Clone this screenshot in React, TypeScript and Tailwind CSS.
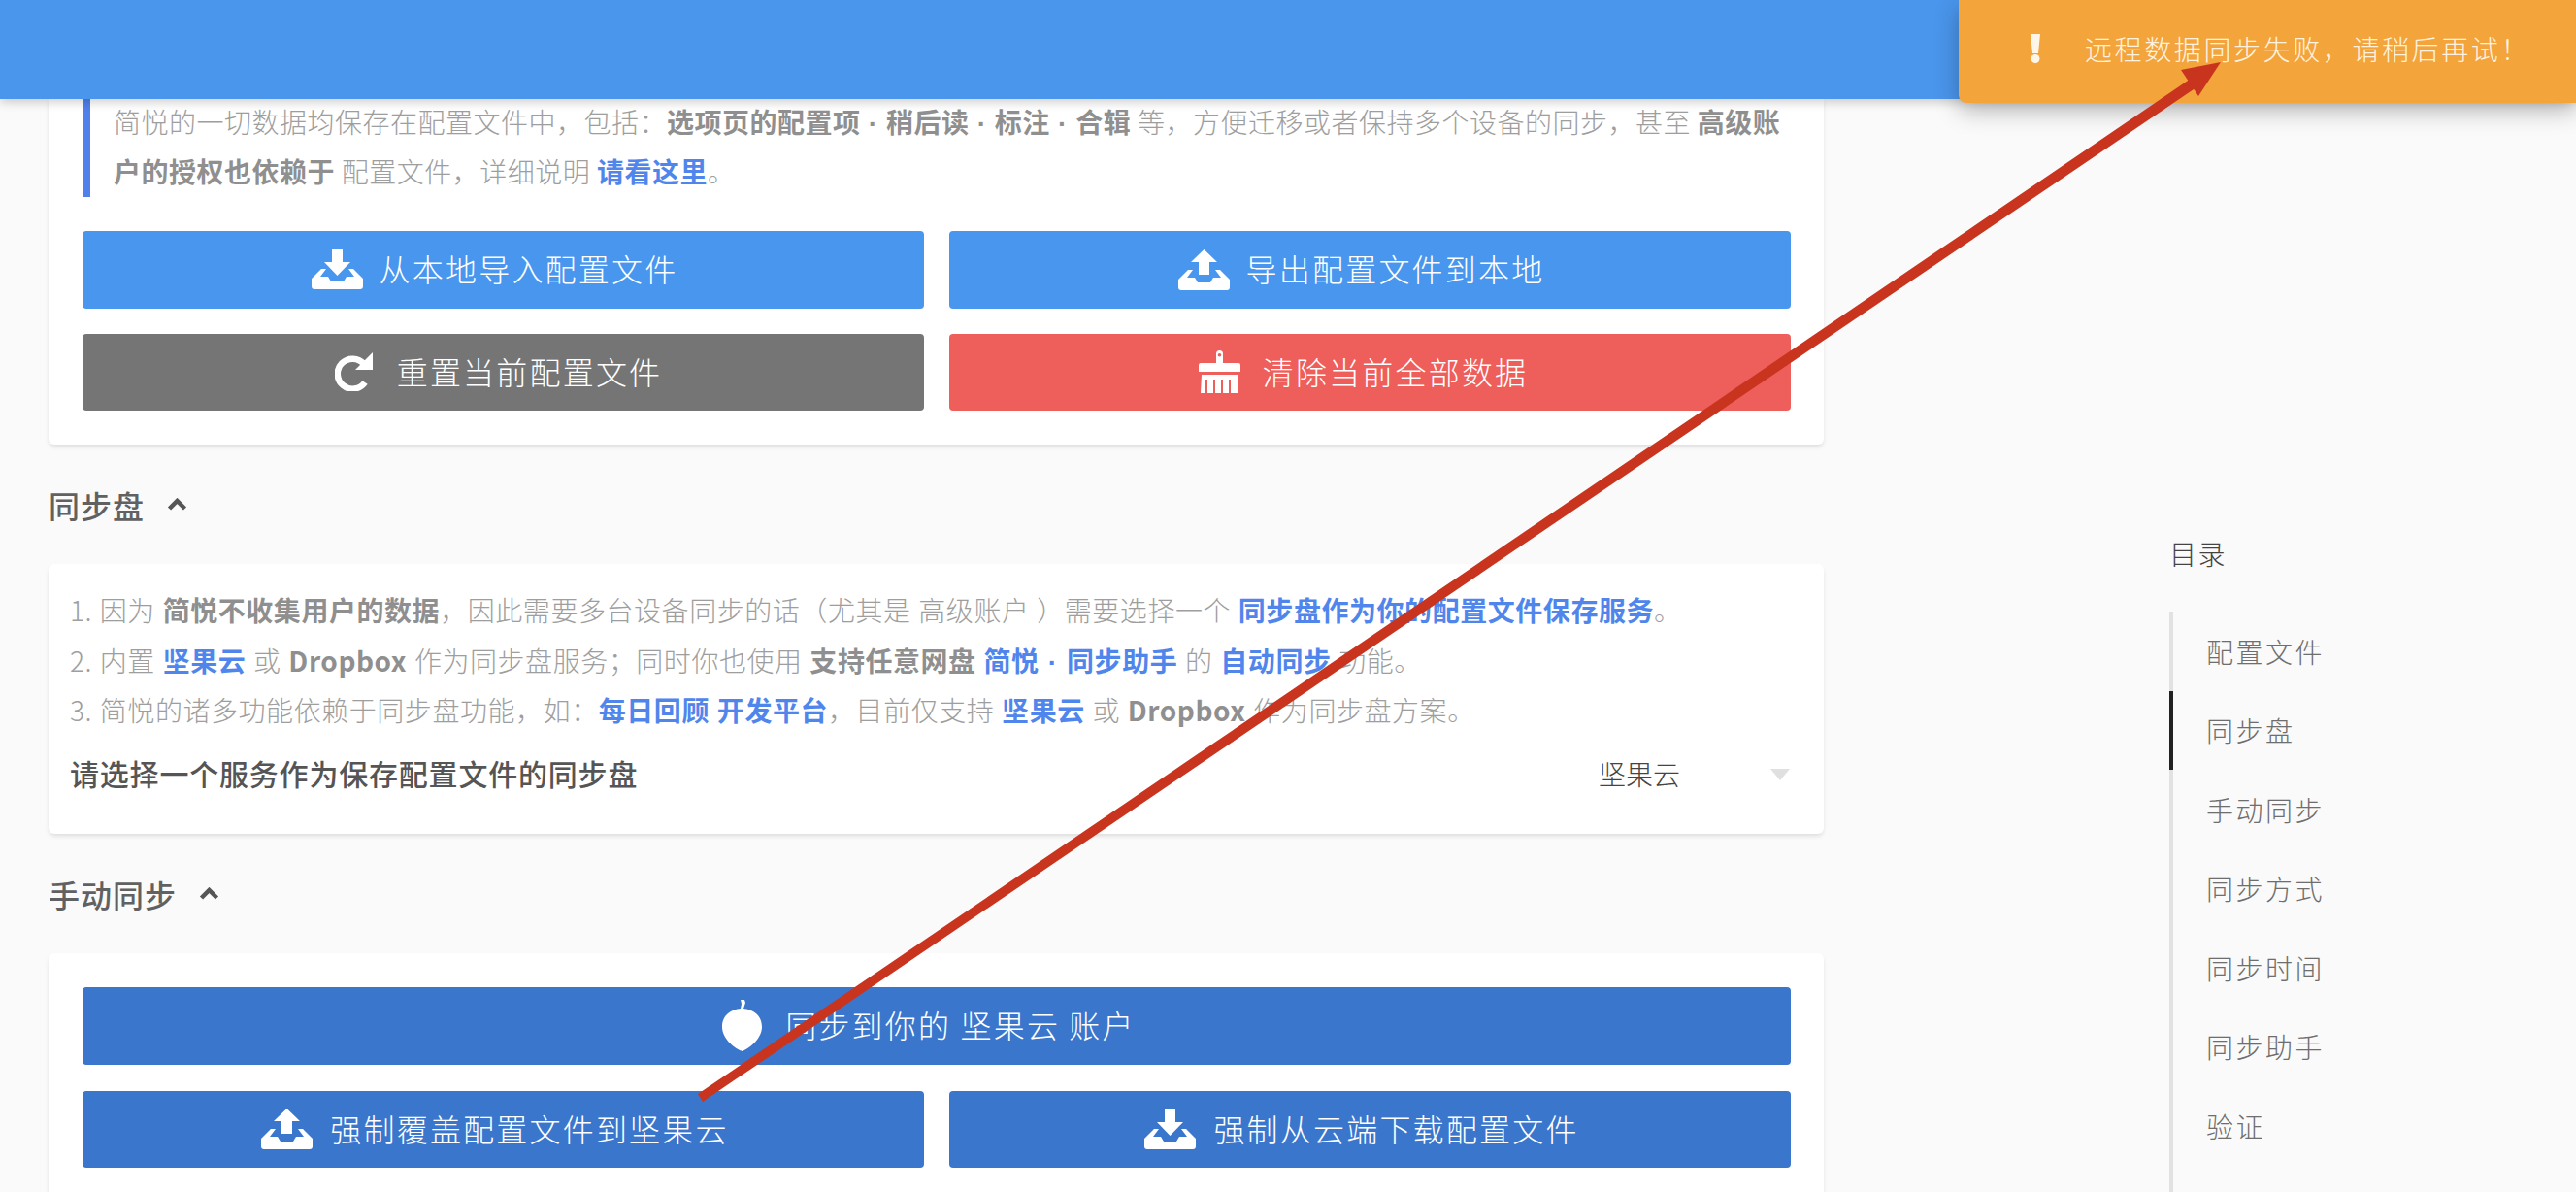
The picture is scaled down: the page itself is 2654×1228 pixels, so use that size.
import type { ReactNode } from 'react'

const DownloadIcon = () => (
  <svg viewBox="0 0 53 41" className="h-[41px] w-[53px] shrink-0" fill="white">
    <path d="M21 0h11v13h8L26.500 27 13 13h8z" />
    <path d="M0 30 10 20h5l-6 8h8l3 5h13l3-5h8l-6-8h5l10 10v8q0 3-3 3H3q-3 0-3-3z" />
  </svg>
)

const UploadIcon = () => (
  <svg viewBox="0 0 53 42" className="h-[42px] w-[53px] shrink-0" fill="white">
    <path d="M26.500 0 40 13h-8v13H21V13h-8z" />
    <path d="M0 31 10 21h5l-6 8h8l3 5h13l3-5h8l-6-8h5l10 10v8q0 3-3 3H3q-3 0-3-3z" />
  </svg>
)

const ResetIcon = () => (
  <svg viewBox="0 0 39 40" className="h-[40px] w-[39px] shrink-0" fill="none">
    <path d="M30 12A15.500 15.500 0 1 0 31 31" stroke="white" strokeWidth="6.500" />
    <path d="M39 0v18H21z" fill="white" />
  </svg>
)

const BrushIcon = () => (
  <svg viewBox="0 0 43 44" className="h-[44px] w-[43px] shrink-0" fill="white">
    <path fillRule="evenodd" d="M18 3.500a3.500 3.500 0 0 1 7 0V13h16q2 0 2 2v7H0v-7q0-2 2-2h16zM21.500 3a1.800 1.800 0 1 0 0 3.600 1.800 1.800 0 0 0 0-3.600z" />
    <path d="M3 25h37l1 19h-8V30h-2v14h-6V30h-2v14h-6V30h-2v14h-6V30h-2v14H2z" />
  </svg>
)

const AcornIcon = () => (
  <svg viewBox="0 0 41 53" className="h-[53px] w-[41px] shrink-0" fill="white">
    <path d="M19 0h4l1 3-2 6c9 1 19 6 19 19 0 11-11 21-20.500 25C11 49 0 39 0 28 0 15 10 10 19 9l1-5z" />
  </svg>
)

const Chevron = () => (
  <svg viewBox="0 0 21 13" className="ml-[23px] h-[13px] w-[21px]" fill="none">
    <path d="M2.500 11 10.500 3l8 8" stroke="#555" strokeWidth="4.500" />
  </svg>
)

function ActionButton({ icon, color, className, children }: { icon: ReactNode; color: string; className: string; children: ReactNode }) {
  return (
    <button className={`flex h-[79.500px] items-center justify-center rounded-[4px] text-[32px] font-light tracking-[2.200px] whitespace-pre text-white ${color} ${className}`}>
      {icon}
      <span className="-mt-[3px]">{children}</span>
    </button>
  )
}

const Strong = ({ children }: { children: ReactNode }) => <b className="font-bold text-[#8f8f8f]">{children}</b>
const Link = ({ children }: { children: ReactNode }) => <b className="font-bold text-[#5086ec]">{children}</b>
// the CJK font's middle dot is full width, the picture's is narrow
const Dot = () => <span className="font-['Liberation_Sans',sans-serif] leading-[0]"> · </span>

function SectionTitle({ children }: { children: ReactNode }) {
  return (
    <h2 className="flex h-[123px] items-center text-[32px] font-medium tracking-[1px] text-[#616161]">
      {children}
      <Chevron />
    </h2>
  )
}

const tocItems = ['配置文件', '同步盘', '手动同步', '同步方式', '同步时间', '同步助手', '验证', '高级选项']

export default function App() {
  return (
    <div className="relative h-[1228px] w-[2654px] overflow-hidden bg-[#fafafa] font-['Noto_Sans_CJK_SC',sans-serif]">
      <header className="relative z-10 h-[102px] bg-[#4a96ec] shadow-[0_3px_10px_rgba(0,0,0,0.2)]" />

      <div className="flex">
        <main className="ml-[50px] w-[1829px]">
          <section className="rounded-b-[6px] bg-white pr-[34px] pb-[35px] pl-[35px] shadow-[0_3px_5px_-1px_rgba(0,0,0,0.13)]">
            <blockquote className="-mt-[2px] h-[103px] border-l-[8px] border-[#4f80ec] pl-[24px] text-[28px] leading-[51px] font-light tracking-[0.500px] text-[#9e9e9e]">
              简悦的一切数据均保存在配置文件中，包括：<Strong>选项页的配置项<Dot />稍后读<Dot />标注<Dot />合辑</Strong> 等，方便迁移或者保持多个设备的同步，甚至 <Strong>高级账户的授权也依赖于</Strong> 配置文件，详细说明 <Link>请看这里</Link>。
            </blockquote>
            <div className="mt-[35px] grid grid-cols-2 gap-[26px]">
              <ActionButton icon={<DownloadIcon />} color="bg-[#4896ed]" className="gap-[17px] pr-[18px]">从本地导入配置文件</ActionButton>
              <ActionButton icon={<UploadIcon />} color="bg-[#4896ed]" className="gap-[17px] pr-[18px]">导出配置文件到本地</ActionButton>
              <ActionButton icon={<ResetIcon />} color="bg-[#757575]" className="gap-[25px] pr-[10px]">重置当前配置文件</ActionButton>
              <ActionButton icon={<BrushIcon />} color="bg-[#ee5e5a]" className="gap-[23px] pr-[14px]">清除当前全部数据</ActionButton>
            </div>
          </section>

          <SectionTitle>同步盘</SectionTitle>
          <section className="h-[278px] rounded-[6px] bg-white px-[22px] pt-[22px] shadow-[0_3px_5px_-1px_rgba(0,0,0,0.13)]">
            <div className="text-[28px] leading-[51.500px] font-light tracking-[0.550px] [word-spacing:1px] text-[#9e9e9e]">
              <p>1. 因为 <Strong>简悦不收集用户的数据</Strong>，因此需要多台设备同步的话（尤其是 高级账户 ）需要选择一个 <Link>同步盘作为你的配置文件保存服务</Link>。</p>
              <p>2. 内置 <Link>坚果云</Link> 或 <Strong>Dropbox</Strong> 作为同步盘服务；同时你也使用 <Strong>支持任意网盘</Strong> <Link>简悦<Dot />同步助手</Link> 的 <Link>自动同步</Link> 功能。</p>
              <p>3. 简悦的诸多功能依赖于同步盘功能，如：<Link>每日回顾 开发平台</Link>，目前仅支持 <Link>坚果云</Link> 或 <Strong>Dropbox</Strong> 作为同步盘方案。</p>
            </div>
            <div className="flex h-[78px] items-center justify-between">
              <span className="text-[30px] font-medium tracking-[0.800px] text-[#555]">请选择一个服务作为保存配置文件的同步盘</span>
              <div className="flex items-center">
                <span className="text-[28px] font-light text-[#444]">坚果云</span>
                <span className="mt-[2px] mr-[13px] ml-[93px] h-0 w-0 border-x-[10px] border-t-[12px] border-x-transparent border-t-[#e0e0e0]" />
              </div>
            </div>
          </section>

          <SectionTitle>手动同步</SectionTitle>
          <section className="h-[300px] rounded-t-[6px] bg-white pt-[35px] pr-[34px] pl-[35px] shadow-[0_3px_5px_-1px_rgba(0,0,0,0.13)]">
            <ActionButton icon={<AcornIcon />} color="bg-[#3a76cc]" className="w-full gap-[24px] pr-[16px]">同步到你的 坚果云 账户</ActionButton>
            <div className="mt-[27px] grid grid-cols-2 gap-[26px]">
              <ActionButton icon={<UploadIcon />} color="bg-[#3a76cc]" className="gap-[18px] pr-[17px]">强制覆盖配置文件到坚果云</ActionButton>
              <ActionButton icon={<DownloadIcon />} color="bg-[#3a76cc]" className="gap-[18px] pr-[17px]">强制从云端下载配置文件</ActionButton>
            </div>
          </section>
        </main>

        <aside className="ml-[356px] w-[300px] pt-[438px]">
          <div className="flex h-[60px] items-center text-[28px] font-light tracking-[1.500px] text-[#444]">目录</div>
          <ul className="mt-[30px] border-l-[4px] border-[#e2e2e2]">
            {tocItems.map((item) => (
              <li
                key={item}
                className={`-ml-[4px] flex h-[81.500px] items-center border-l-[4px] pl-[34px] text-[28px] font-light tracking-[2.500px] text-[#6e6e6e] ${item === '同步盘' ? 'border-[#212121]' : 'border-transparent'}`}
              >
                {item}
              </li>
            ))}
          </ul>
        </aside>
      </div>

      {/* toast sits over the header, flush with the top right corner */}
      <div className="absolute top-0 right-0 z-20 flex h-[106px] w-[636px] items-center rounded-bl-[8px] bg-[#f3a43b] pb-[6px] pl-[73px] shadow-[0_8px_24px_rgba(0,0,0,0.28)]">
        <svg viewBox="0 0 12 30" className="h-[30px] w-[12px]" fill="#fff6ea">
          <path d="M1 0h10l-2 20H3z" />
          <circle cx="6" cy="25.500" r="4.500" />
        </svg>
        <span className="ml-[45px] text-[28px] font-light tracking-[2.600px] text-[#fff3e0]">远程数据同步失败，请稍后再试！</span>
      </div>

      {/* red annotation arrow drawn on top of the screenshot */}
      <svg viewBox="0 0 2654 1228" className="pointer-events-none absolute inset-0 z-30 h-[1228px] w-[2654px]">
        <path d="M719 1127 724 1135 2263 90 2257 81z" fill="#c9341f" />
        <path d="M2288 64 2247 72 2265 99z" fill="#c9341f" />
      </svg>
    </div>
  )
}
